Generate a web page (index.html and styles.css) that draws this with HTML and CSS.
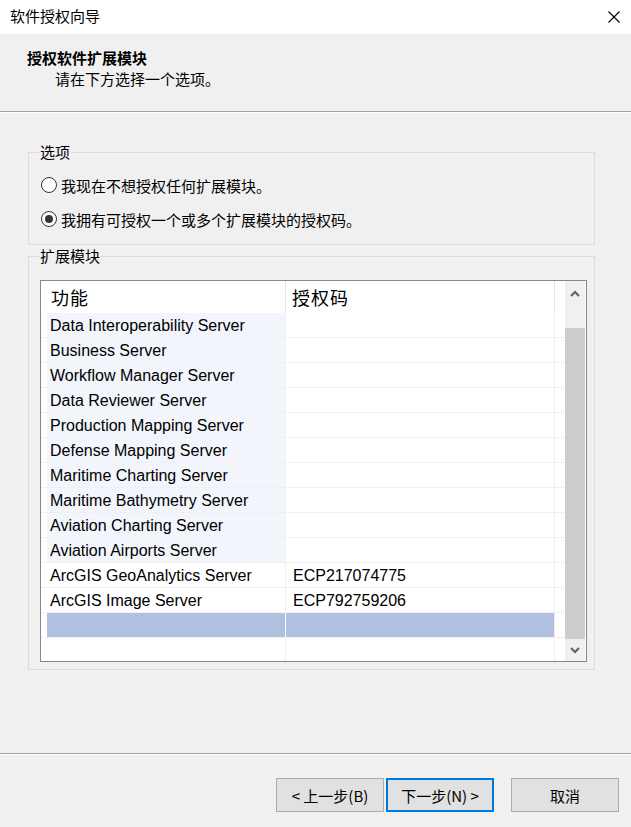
FILE: index.html
```html
<!DOCTYPE html>
<html lang="zh-CN">
<head>
<meta charset="utf-8">
<title>软件授权向导</title>
<link rel="stylesheet" href="styles.css">
</head>
<body>
<div class="window">
  <div class="titlebar">
    <span class="title">软件授权向导</span>
    <svg class="close" width="12" height="12" viewBox="0 0 12 12"><path d="M0.5 0.5 L11.5 11.5 M11.5 0.5 L0.5 11.5" stroke="#000" stroke-width="1.1" fill="none"/></svg>
  </div>
  <div class="header">
    <div class="heading">授权软件扩展模块</div>
    <div class="subheading">请在下方选择一个选项。</div>
  </div>
  <div class="content">
    <fieldset class="group group-options">
      <legend>选项</legend>
      <div class="radio-row"><span class="radio"></span><span>我现在不想授权任何扩展模块。</span></div>
      <div class="radio-row"><span class="radio checked"></span><span>我拥有可授权一个或多个扩展模块的授权码。</span></div>
    </fieldset>
    <fieldset class="group group-ext">
      <legend>扩展模块</legend>
      <div class="listbox">
        <div class="grid">
          <div class="grid-head">
            <div class="hcell hcell1">功能</div>
            <div class="hcell hcell2">授权码</div>
          </div>
          <div class="row"><div class="cell c1 tint">Data Interoperability Server</div><div class="cell c2"></div></div>
          <div class="row"><div class="cell c1 tint">Business Server</div><div class="cell c2"></div></div>
          <div class="row"><div class="cell c1 tint">Workflow Manager Server</div><div class="cell c2"></div></div>
          <div class="row"><div class="cell c1 tint">Data Reviewer Server</div><div class="cell c2"></div></div>
          <div class="row"><div class="cell c1 tint">Production Mapping Server</div><div class="cell c2"></div></div>
          <div class="row"><div class="cell c1 tint">Defense Mapping Server</div><div class="cell c2"></div></div>
          <div class="row"><div class="cell c1 tint">Maritime Charting Server</div><div class="cell c2"></div></div>
          <div class="row"><div class="cell c1 tint">Maritime Bathymetry Server</div><div class="cell c2"></div></div>
          <div class="row"><div class="cell c1 tint">Aviation Charting Server</div><div class="cell c2"></div></div>
          <div class="row"><div class="cell c1 tint">Aviation Airports Server</div><div class="cell c2"></div></div>
          <div class="row"><div class="cell c1">ArcGIS GeoAnalytics Server</div><div class="cell c2">ECP217074775</div></div>
          <div class="row"><div class="cell c1">ArcGIS Image Server</div><div class="cell c2">ECP792759206</div></div>
          <div class="row selected"><div class="cell c1"></div><div class="cell c2"></div></div>
          <div class="row last"><div class="cell c1"></div><div class="cell c2"></div></div>
        </div>
        <div class="scrollbar">
          <div class="sb-btn sb-up"><svg width="10" height="7" viewBox="0 0 10 7"><path d="M1 6 L5 2 L9 6" stroke="#606060" stroke-width="2" fill="none"/></svg></div>
          <div class="sb-track"><div class="sb-thumb"></div></div>
          <div class="sb-btn sb-down"><svg width="10" height="7" viewBox="0 0 10 7"><path d="M1 1 L5 5 L9 1" stroke="#606060" stroke-width="2" fill="none"/></svg></div>
        </div>
      </div>
    </fieldset>
  </div>
  <div class="footer">
    <button class="btn">&lt; 上一步(B)</button>
    <button class="btn focused">下一步(N) &gt;</button>
    <button class="btn cancel">取消</button>
  </div>
</div>
</body>
</html>
```

FILE: styles.css
```css
html, body {
  margin: 0;
  padding: 0;
}
body {
  width: 631px;
  height: 827px;
  overflow: hidden;
  font-family: "Noto Sans CJK SC", "Noto Sans", sans-serif;
  font-size: 15px;
  color: #000;
}
.window {
  width: 631px;
  height: 827px;
  background: #f0f0f0;
  display: flex;
  flex-direction: column;
}
.titlebar {
  height: 34px;
  flex: none;
  background: #fff;
  display: flex;
  align-items: center;
  justify-content: space-between;
  padding: 0 11px 0 10px;
}
.title {
  line-height: 18px;
  margin-top: -2px;
}
.close {
  display: block;
}
.header {
  height: 78px;
  flex: none;
  box-sizing: border-box;
  padding: 16px 0 0 27px;
  border-bottom: 1px solid #a0a0a0;
  box-shadow: 0 1px 0 #fff;
}
.heading {
  font-weight: 700;
  line-height: 16px;
}
.subheading {
  line-height: 16px;
  margin-top: 5px;
  padding-left: 28px;
}
.content {
  padding: 31px 0 0 28px;
}
.group {
  box-sizing: border-box;
  width: 567px;
  margin: 0;
  min-width: 0;
  border: 1px solid #dcdcdc;
  padding: 11px 0 12px 10px;
}
.group legend {
  padding: 0 1px;
  line-height: 18px;
}
.radio-row {
  height: 26px;
  display: flex;
  align-items: center;
  gap: 4px;
  margin-left: 2px;
}
.radio-row + .radio-row {
  margin-top: 8px;
}
.radio {
  width: 14px;
  height: 14px;
  border: 1px solid #333;
  border-radius: 50%;
  background: #fff;
  display: flex;
  align-items: center;
  justify-content: center;
}
.radio.checked::after {
  content: "";
  width: 8px;
  height: 8px;
  border-radius: 50%;
  background: #333;
}
.group-ext {
  margin-top: 2px;
  padding: 15px 0 7px 10px;
}
.listbox {
  box-sizing: border-box;
  width: 547px;
  height: 382px;
  margin-left: 1px;
  border: 1px solid #828790;
  background: #fff;
  display: flex;
  overflow: hidden;
}
.grid {
  flex: 1;
  display: flex;
  flex-direction: column;
}
.grid-head {
  height: 32px;
  flex: none;
  display: flex;
}
.hcell {
  font-size: 18px;
  letter-spacing: 1px;
  line-height: 32px;
  box-sizing: border-box;
}
.hcell1 {
  width: 245px;
  padding-left: 10px;
  border-right: 1px solid #e5e5e5;
}
.hcell2 {
  width: 269px;
  padding-left: 6px;
  border-right: 1px solid #e5e5e5;
}
.row {
  height: 25px;
  flex: none;
  box-sizing: border-box;
  display: flex;
  padding-left: 6px;
  border-bottom: 1px solid #f0f0f0;
  font-family: "Liberation Sans", Arial, sans-serif;
  font-size: 16px;
}
.row.last {
  border-bottom: none;
}
.cell {
  line-height: 25px;
  height: 24px;
  box-sizing: border-box;
  white-space: nowrap;
}
.c1 {
  width: 238px;
  padding-left: 3px;
}
.c2 {
  width: 270px;
  padding-left: 7px;
  border-left: 1px solid #f0f0f0;
  border-right: 1px solid #f0f0f0;
}
.tint {
  background: #f2f5fb;
}
.selected .cell {
  background: #b0c0e0;
}
.selected .c2 {
  border-left-color: #fff;
}
.scrollbar {
  width: 20px;
  margin-right: 1px;
  flex: none;
  background: #f0f0f0;
  display: flex;
  flex-direction: column;
}
.sb-btn {
  display: flex;
  align-items: center;
  justify-content: center;
  flex: none;
}
.sb-up {
  height: 24px;
}
.sb-down {
  height: 22px;
}
.sb-track {
  flex: 1;
  display: flex;
  flex-direction: column;
}
.sb-thumb {
  margin-top: 23px;
  flex: 1;
  background: #cdcdcd;
}
.footer {
  margin-top: auto;
  height: 74px;
  flex: none;
  box-sizing: border-box;
  border-top: 1px solid #a0a0a0;
  box-shadow: inset 0 1px 0 #fff;
  display: flex;
  justify-content: flex-end;
  align-items: flex-start;
  padding: 24px 12px 0 0;
}
.btn {
  width: 108px;
  height: 34px;
  box-sizing: border-box;
  background: #e1e1e1;
  border: 1px solid #adadad;
  font-family: "Noto Sans CJK SC", "Noto Sans", sans-serif;
  font-size: 15px;
  color: #000;
  padding: 0;
  margin: 0;
}
.btn + .btn {
  margin-left: 2px;
}
.btn.focused {
  border-color: #0078d7;
  box-shadow: inset 0 0 0 1px #0078d7;
}
.btn.cancel {
  margin-left: 17px;
}
```
